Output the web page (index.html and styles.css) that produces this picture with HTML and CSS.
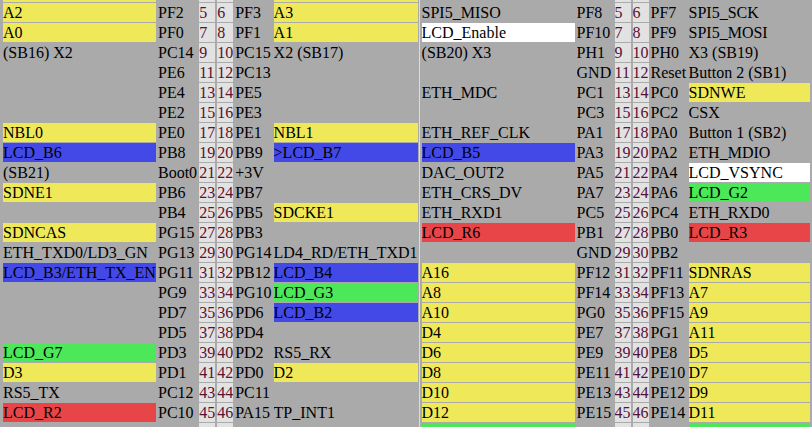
FILE: index.html
```html
<!DOCTYPE html>
<html>
<head>
<meta charset="utf-8">
<title>Pinout</title>
<link rel="stylesheet" href="styles.css">
</head>
<body>
<div class="board">
<table class="conn conn-left">
<colgroup><col class="c-lab"><col class="c-pin"><col class="c-num"><col class="c-num"><col class="c-pinr"><col class="c-labr"></colgroup>
<tbody>
<tr><td class="y"></td><td class="p"></td><td class="n"></td><td class="n"></td><td class="p"></td><td class="y"></td></tr>
<tr><td class="y">A2</td><td class="p">PF2</td><td class="n">5</td><td class="n">6</td><td class="p">PF3</td><td class="y">A3</td></tr>
<tr><td class="y">A0</td><td class="p">PF0</td><td class="n">7</td><td class="n">8</td><td class="p">PF1</td><td class="y">A1</td></tr>
<tr><td>(SB16) X2</td><td class="p">PC14</td><td class="n">9</td><td class="n">10</td><td class="p">PC15</td><td>X2 (SB17)</td></tr>
<tr><td></td><td class="p">PE6</td><td class="n">11</td><td class="n">12</td><td class="p">PC13</td><td></td></tr>
<tr><td></td><td class="p">PE4</td><td class="n">13</td><td class="n">14</td><td class="p">PE5</td><td></td></tr>
<tr><td></td><td class="p">PE2</td><td class="n">15</td><td class="n">16</td><td class="p">PE3</td><td></td></tr>
<tr><td class="y">NBL0</td><td class="p">PE0</td><td class="n">17</td><td class="n">18</td><td class="p">PE1</td><td class="y">NBL1</td></tr>
<tr><td class="b">LCD_B6</td><td class="p">PB8</td><td class="n">19</td><td class="n">20</td><td class="p">PB9</td><td class="b">&gt;LCD_B7</td></tr>
<tr><td>(SB21)</td><td class="p">Boot0</td><td class="n">21</td><td class="n">22</td><td class="p">+3V</td><td></td></tr>
<tr><td class="y">SDNE1</td><td class="p">PB6</td><td class="n">23</td><td class="n">24</td><td class="p">PB7</td><td></td></tr>
<tr><td></td><td class="p">PB4</td><td class="n">25</td><td class="n">26</td><td class="p">PB5</td><td class="y">SDCKE1</td></tr>
<tr><td class="y">SDNCAS</td><td class="p">PG15</td><td class="n">27</td><td class="n">28</td><td class="p">PB3</td><td></td></tr>
<tr><td>ETH_TXD0/LD3_GN</td><td class="p">PG13</td><td class="n">29</td><td class="n">30</td><td class="p">PG14</td><td>LD4_RD/ETH_TXD1</td></tr>
<tr><td class="b">LCD_B3/ETH_TX_EN</td><td class="p">PG11</td><td class="n">31</td><td class="n">32</td><td class="p">PB12</td><td class="b">LCD_B4</td></tr>
<tr><td></td><td class="p">PG9</td><td class="n">33</td><td class="n">34</td><td class="p">PG10</td><td class="g">LCD_G3</td></tr>
<tr><td></td><td class="p">PD7</td><td class="n">35</td><td class="n">36</td><td class="p">PD6</td><td class="b">LCD_B2</td></tr>
<tr><td></td><td class="p">PD5</td><td class="n">37</td><td class="n">38</td><td class="p">PD4</td><td></td></tr>
<tr><td class="g">LCD_G7</td><td class="p">PD3</td><td class="n">39</td><td class="n">40</td><td class="p">PD2</td><td>RS5_RX</td></tr>
<tr><td class="y">D3</td><td class="p">PD1</td><td class="n">41</td><td class="n">42</td><td class="p">PD0</td><td class="y">D2</td></tr>
<tr><td>RS5_TX</td><td class="p">PC12</td><td class="n">43</td><td class="n">44</td><td class="p">PC11</td><td></td></tr>
<tr><td class="r">LCD_R2</td><td class="p">PC10</td><td class="n">45</td><td class="n">46</td><td class="p">PA15</td><td>TP_INT1</td></tr>
<tr><td></td><td class="p"></td><td class="n"></td><td class="n"></td><td class="p"></td><td></td></tr>
</tbody>
</table>
<table class="conn conn-right">
<colgroup><col class="c-lab"><col class="c-pin2"><col class="c-num"><col class="c-num"><col class="c-pinr2"><col class="c-labr2"></colgroup>
<tbody>
<tr><td></td><td class="p"></td><td class="n"></td><td class="n"></td><td class="p"></td><td></td></tr>
<tr><td>SPI5_MISO</td><td class="p">PF8</td><td class="n">5</td><td class="n">6</td><td class="p">PF7</td><td>SPI5_SCK</td></tr>
<tr><td class="w">LCD_Enable</td><td class="p">PF10</td><td class="n">7</td><td class="n">8</td><td class="p">PF9</td><td>SPI5_MOSI</td></tr>
<tr><td>(SB20) X3</td><td class="p">PH1</td><td class="n">9</td><td class="n">10</td><td class="p">PH0</td><td>X3 (SB19)</td></tr>
<tr><td></td><td class="p">GND</td><td class="n">11</td><td class="n">12</td><td class="p">Reset</td><td>Button 2 (SB1)</td></tr>
<tr><td>ETH_MDC</td><td class="p">PC1</td><td class="n">13</td><td class="n">14</td><td class="p">PC0</td><td class="y">SDNWE</td></tr>
<tr><td></td><td class="p">PC3</td><td class="n">15</td><td class="n">16</td><td class="p">PC2</td><td>CSX</td></tr>
<tr><td>ETH_REF_CLK</td><td class="p">PA1</td><td class="n">17</td><td class="n">18</td><td class="p">PA0</td><td>Button 1 (SB2)</td></tr>
<tr><td class="b">LCD_B5</td><td class="p">PA3</td><td class="n">19</td><td class="n">20</td><td class="p">PA2</td><td>ETH_MDIO</td></tr>
<tr><td>DAC_OUT2</td><td class="p">PA5</td><td class="n">21</td><td class="n">22</td><td class="p">PA4</td><td class="w">LCD_VSYNC</td></tr>
<tr><td>ETH_CRS_DV</td><td class="p">PA7</td><td class="n">23</td><td class="n">24</td><td class="p">PA6</td><td class="g">LCD_G2</td></tr>
<tr><td>ETH_RXD1</td><td class="p">PC5</td><td class="n">25</td><td class="n">26</td><td class="p">PC4</td><td>ETH_RXD0</td></tr>
<tr><td class="r">LCD_R6</td><td class="p">PB1</td><td class="n">27</td><td class="n">28</td><td class="p">PB0</td><td class="r">LCD_R3</td></tr>
<tr><td></td><td class="p">GND</td><td class="n">29</td><td class="n">30</td><td class="p">PB2</td><td></td></tr>
<tr><td class="y">A16</td><td class="p">PF12</td><td class="n">31</td><td class="n">32</td><td class="p">PF11</td><td class="y">SDNRAS</td></tr>
<tr><td class="y">A8</td><td class="p">PF14</td><td class="n">33</td><td class="n">34</td><td class="p">PF13</td><td class="y">A7</td></tr>
<tr><td class="y">A10</td><td class="p">PG0</td><td class="n">35</td><td class="n">36</td><td class="p">PF15</td><td class="y">A9</td></tr>
<tr><td class="y">D4</td><td class="p">PE7</td><td class="n">37</td><td class="n">38</td><td class="p">PG1</td><td class="y">A11</td></tr>
<tr><td class="y">D6</td><td class="p">PE9</td><td class="n">39</td><td class="n">40</td><td class="p">PE8</td><td class="y">D5</td></tr>
<tr><td class="y">D8</td><td class="p">PE11</td><td class="n">41</td><td class="n">42</td><td class="p">PE10</td><td class="y">D7</td></tr>
<tr><td class="y">D10</td><td class="p">PE13</td><td class="n">43</td><td class="n">44</td><td class="p">PE12</td><td class="y">D9</td></tr>
<tr><td class="y">D12</td><td class="p">PE15</td><td class="n">45</td><td class="n">46</td><td class="p">PE14</td><td class="y">D11</td></tr>
<tr><td class="g"></td><td class="p"></td><td class="n"></td><td class="n"></td><td class="p"></td><td class="g"></td></tr>
</tbody>
</table>
</div>
</body>
</html>
```
FILE: styles.css
```css
html, body {
  margin: 0;
  padding: 0;
  background: #aaaaaa;
  overflow: hidden;
}

body {
  font-family: "Liberation Serif", "Times New Roman", serif;
  font-size: 16px;
  color: #000;
}

.board {
  display: flex;
  align-items: flex-start;
  margin-top: -18px;
  padding-left: 1px;
}

.conn {
  border-collapse: separate;
  border-spacing: 2px 1px;
  table-layout: fixed;
  flex: none;
}

.conn-right {
  border-left: 1px solid #dcdcdc;
  margin-left: -1px;
}

.conn td {
  padding: 0;
  height: 19px;
  line-height: 19px;
  white-space: nowrap;
  overflow: hidden;
  vertical-align: middle;
}

.c-lab { width: 153px; }
.c-pin { width: 39px; }
.c-num { width: 16px; }
.c-pinr { width: 36px; }
.c-labr { width: 143px; }
.c-pin2 { width: 36px; }
.c-pinr2 { width: 36px; }
.c-labr2 { width: 121px; }

.conn td.n {
  background: #e2e2e2;
  color: #5a1030;
}

.y { background: #efe95a; }
.b { background: #4349e6; }
.g { background: #4ce85a; }
.r { background: #e84548; }
.w { background: #ffffff; }
```
